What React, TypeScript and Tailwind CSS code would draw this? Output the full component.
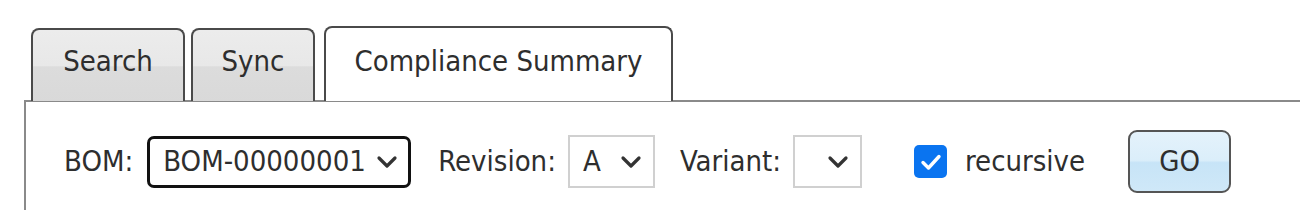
import React from 'react';

const font = "font-['DejaVu_Sans_Condensed','DejaVu_Sans',sans-serif]";

function Chevron() {
  return (
    <svg width="22" height="14" viewBox="0 0 22 14" className="shrink-0">
      <path d="M3 3 L11 11 L19 3" fill="none" stroke="#333" strokeWidth="3.2" strokeLinecap="round" strokeLinejoin="round" />
    </svg>
  );
}

function Tab({ label, active, width }: { label: string; active?: boolean; width: string }) {
  if (active) {
    return (
      <div
        className={`relative z-10 flex h-[75px] items-center justify-center rounded-t-[8px] border-2 border-b-0 border-[#4a4a4a] bg-white text-[29px] text-[#2e2e2e] ${width}`}
      >
        <span className="-mt-[5px]">{label}</span>
      </div>
    );
  }
  return (
    <div
      className={`flex h-[73px] items-center justify-center rounded-t-[8px] border-2 border-b-0 border-[#4a4a4a] bg-[linear-gradient(#ececec_0%,#e8e8e8_50%,#dcdcdc_52%,#d9d9d9_100%)] text-[29px] text-[#2e2e2e] ${width}`}
    >
      <span className="-mt-[7px]">{label}</span>
    </div>
  );
}

export default function App() {
  return (
    <div className={`h-[210px] w-[1300px] overflow-hidden bg-white pt-[26px] pl-[24px] ${font}`}>
      {/* Tabs */}
      <div className="relative -mb-[1px] flex items-end pl-[7px]">
        <Tab label="Search" width="w-[154px]" />
        <div className="w-[6px]" />
        <Tab label="Sync" width="w-[124px]" />
        <div className="w-[9px]" />
        <Tab label="Compliance Summary" active width="w-[349px]" />
      </div>

      {/* Panel */}
      <div className="h-[120px] border-t-2 border-l-2 border-[#8a8a8a] pl-[38px] pt-[28px]">
        <div className="flex items-center text-[29px] text-[#2e2e2e]">
          <span>BOM:</span>
          <div className="ml-[14px] flex h-[52px] w-[264px] items-center justify-between rounded-[7px] border-[3px] border-[#111] pl-[13px] pr-[10px]">
            <span>BOM-00000001</span>
            <Chevron />
          </div>

          <span className="ml-[27px]">Revision:</span>
          <div className="ml-[12px] flex h-[53px] w-[87px] items-center justify-between border-2 border-[#d0d0d0] pl-[13px] pr-[11px]">
            <span>A</span>
            <Chevron />
          </div>

          <span className="ml-[25px]">Variant:</span>
          <div className="ml-[12px] flex h-[53px] w-[69px] items-center justify-end border-2 border-[#d0d0d0] pr-[11px]">
            <Chevron />
          </div>

          <div className="ml-[52px] flex h-[33px] w-[33px] items-center justify-center rounded-[5px] bg-[#0a74f0]">
            <svg width="22" height="18" viewBox="0 0 22 18">
              <path d="M3 9.5 L8.5 15 L19 3.5" fill="none" stroke="white" strokeWidth="3.4" strokeLinecap="round" strokeLinejoin="round" />
            </svg>
          </div>
          <span className="ml-[18px]">recursive</span>

          <button className="ml-[43px] flex h-[63px] w-[103px] items-center justify-center rounded-[9px] border-2 border-[#555] bg-[linear-gradient(#e4f2fb_0%,#dbeefa_48%,#c7e4f7_52%,#cfe8f8_100%)] text-[29px] text-[#2e2e2e]">
            GO
          </button>
        </div>
      </div>
    </div>
  );
}
